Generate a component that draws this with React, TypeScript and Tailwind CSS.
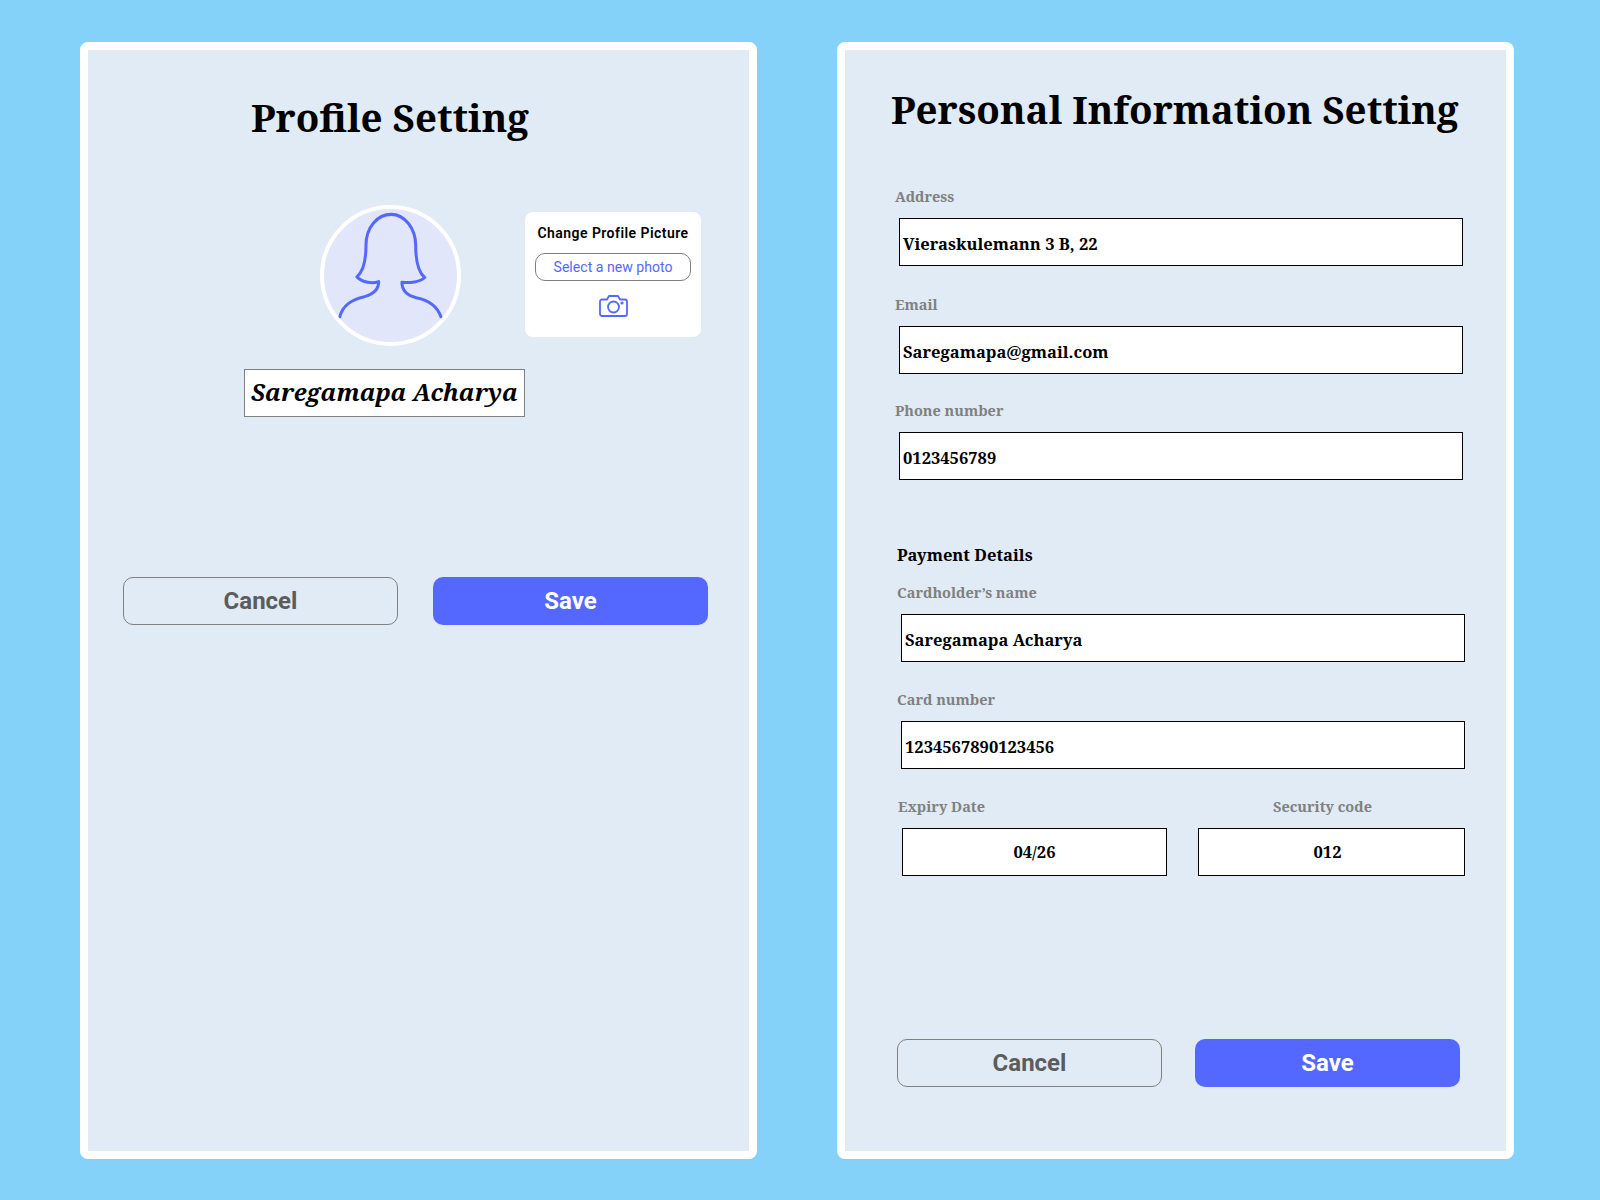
const serif = "font-['Noto_Serif','DejaVu_Serif',serif]";

function Field({ label, value, className = "" }: { label: string; value: string; className?: string }) {
  return (
    <div className={className}>
      <div className="h-[16px] -ml-[4px] text-[14.5px] leading-[14px] font-bold text-[#808080]">{label}</div>
      <div className="mt-[13px] h-[48px] flex items-center border border-black bg-white pl-[3px] pt-[4px] text-[16.5px] font-bold text-black">{value}</div>
    </div>
  );
}

function Buttons({ className, cancelW, saveW }: { className: string; cancelW: string; saveW: string }) {
  return (
    <div className={`flex ${className} font-['Roboto',sans-serif]`}>
      <div className={`${cancelW} h-[48px] flex items-center justify-center rounded-[10px] border border-[#808080] text-[24px] font-bold text-[#5c5c5c]`}>Cancel</div>
      <div className={`${saveW} h-[48px] flex items-center justify-center rounded-[10px] bg-[#5468ff] text-[24px] font-bold text-white`}>Save</div>
    </div>
  );
}

export default function App() {
  return (
    <div className={`w-[1600px] h-[1200px] bg-[#84d2f9] flex pt-[42px] pl-[80px] gap-[80px] ${serif}`}>
      {/* left */}
      <div className="w-[677px] h-[1117px] rounded-[8px] border-[8px] border-white bg-[#e0ebf5] flex flex-col">
        <h1 className="mt-[43px] ml-[163px] h-[48px] text-[38.5px] leading-[48px] font-bold text-black whitespace-nowrap">Profile Setting</h1>
        <div className="mt-[63px] flex items-start">
          <div className="ml-[232px] mt-[1px] w-[141px] h-[141px] rounded-full border-[4px] border-white bg-[#e2e6fb] overflow-hidden">
            <svg viewBox="45 42 396 396" className="block w-full h-full" fill="none" stroke="#5468ff" strokeWidth="9" strokeLinecap="round" strokeLinejoin="round">
              <path d="M92 363C100 330 130 310 165 303C195 295 208 280 208 258C190 265 160 262 143 244C160 230 170 200 170 150C170 95 205 58 245 58C285 58 318 100 318 150C318 200 325 230 345 246C330 260 300 263 277 260C277 285 295 300 320 306C355 313 382 330 393 363" />
            </svg>
          </div>
          <div className="ml-[64px] mt-[8px] w-[176px] h-[125px] rounded-[8px] bg-white flex flex-col items-center pt-[13px] font-['Roboto',sans-serif]">
            <div className="text-[14px] leading-[17px] font-semibold tracking-[0.45px] text-black whitespace-nowrap">Change Profile Picture</div>
            <div className="mt-[11px] w-[156px] h-[28px] rounded-[10px] border border-[#808080] flex items-center justify-center pt-[1px] text-[14.1px] font-[450] text-[#5468ff]">Select a new photo</div>
            <svg className="mt-[14px]" width="29" height="22" viewBox="0 0 29 22" fill="none" stroke="#5468ff" strokeWidth="1.800" strokeLinejoin="round">
              <path d="M3 4.500H8L10 1H19L21 4.500H26a2 2 0 0 1 2 2V19a2 2 0 0 1-2 2H3a2 2 0 0 1-2-2V6.500a2 2 0 0 1 2-2z" />
              <circle cx="14.500" cy="12" r="5.500" />
              <circle cx="23" cy="8" r="0.700" fill="#5468ff" />
            </svg>
          </div>
        </div>
        <div className="mt-[23px] ml-[156px] w-[281px] h-[48px] border border-[#808080] bg-white flex items-center justify-center text-[24px] leading-[30px] pb-[2px] font-bold italic text-black whitespace-nowrap">Saregamapa Acharya</div>
        <Buttons className="mt-[160px] ml-[35px] gap-[35px]" cancelW="w-[275px]" saveW="w-[275px]" />
      </div>
      {/* right */}
      <div className="w-[677px] h-[1117px] rounded-[8px] border-[8px] border-white bg-[#e0ebf5] flex flex-col">
        <h1 className="mt-[35px] ml-[46px] h-[48px] text-[38.5px] leading-[48px] font-bold text-black whitespace-nowrap">Personal Information Setting</h1>
        <Field className="mt-[56px] ml-[54px] w-[564px]" label="Address" value="Vieraskulemann 3 B, 22" />
        <Field className="mt-[31px] ml-[54px] w-[564px]" label="Email" value="Saregamapa@gmail.com" />
        <Field className="mt-[29px] ml-[54px] w-[564px]" label="Phone number" value="0123456789" />
        <div className="mt-[65px] ml-[52px] h-[20px] text-[16.5px] leading-[20px] font-bold text-black">Payment Details</div>
        <Field className="mt-[20px] ml-[56px] w-[564px]" label="Cardholder’s name" value="Saregamapa Acharya" />
        <Field className="mt-[30px] ml-[56px] w-[564px]" label="Card number" value="1234567890123456" />
        <div className="mt-[30px] flex ml-[57px]">
          <div className="w-[265px]">
            <div className="h-[16px] -ml-[4px] text-[14.5px] leading-[14px] font-bold text-[#808080]">Expiry Date</div>
            <div className="mt-[13px] h-[48px] flex items-center justify-center border border-black bg-white text-[16.5px] font-bold text-black">04/26</div>
          </div>
          <div className="ml-[31px] w-[267px]">
            <div className="h-[16px] ml-[75px] text-[14.5px] leading-[14px] font-bold text-[#808080]">Security code</div>
            <div className="mt-[13px] h-[48px] flex items-center justify-center border border-black bg-white pr-[8px] text-[16.5px] font-bold text-black">012</div>
          </div>
        </div>
        <Buttons className="mt-[163px] ml-[52px] gap-[33px]" cancelW="w-[265px]" saveW="w-[265px]" />
      </div>
    </div>
  );
}
